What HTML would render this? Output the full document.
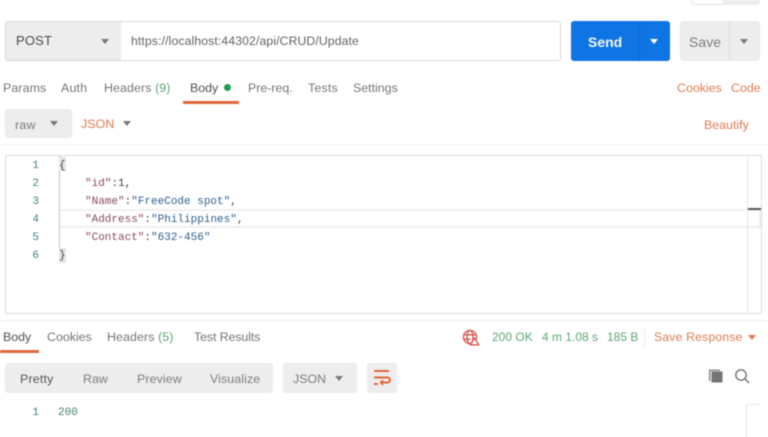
<!DOCTYPE html>
<html>
<head>
<meta charset="utf-8">
<style>
html,body{margin:0;padding:0;background:#fff}
#p{position:relative;width:768px;height:437px;overflow:hidden;background:#fff;font-family:"Liberation Sans",sans-serif;font-size:12.4px;color:#757575;filter:blur(.4px)}
#p div{position:absolute;white-space:nowrap}
.t{line-height:16px;height:16px}
.o{color:#dd7b52}
.g{color:#5fa577}
.m{font-family:"Liberation Mono",monospace;font-size:11px;line-height:18px;height:18px;letter-spacing:0}
.n{color:#3f7f7f;width:14px;text-align:right}
.s{color:#8a4a5e}
.c{width:0;height:0;border-left:4px solid transparent;border-right:4px solid transparent;border-top:5px solid #777}
</style>
</head>
<body>
<div id="p">
  <!-- top fragment -->
  <div style="left:691px;top:-6px;width:33px;height:11px;background:#fff;border:1px solid #e2e2e2;border-radius:3px;box-sizing:border-box"></div>
  <div style="left:724px;top:-6px;width:36px;height:11px;background:#ececec;border-radius:0 3px 3px 0"></div>

  <!-- URL row -->
  <div style="left:5px;top:21px;width:556px;height:40px;box-sizing:border-box;border:1px solid #d8d8d8;border-radius:3px;background:#fff"></div>
  <div style="left:6px;top:22px;width:115px;height:38px;background:#ededed;border-radius:2px 0 0 2px"></div>
  <div class="t" style="left:16px;top:33px;font-size:13px;color:#4a4a4a;letter-spacing:.2px">POST</div>
  <div class="c" style="left:101px;top:39px"></div>
  <div class="t" style="left:131px;top:33px;font-size:12.2px;color:#636363;letter-spacing:.13px">https://localhost:44302/api/CRUD/Update</div>

  <div style="left:571px;top:21px;width:99px;height:40px;background:#0f74e4;border-radius:3px"></div>
  <div style="left:639px;top:21px;width:1px;height:40px;background:#0d6ad4"></div>
  <div class="t" style="left:588px;top:34px;font-size:14px;font-weight:bold;color:#f4f9ff">Send</div>
  <div class="c" style="left:650px;top:39px;border-top-color:#fff"></div>

  <div style="left:680px;top:21px;width:80px;height:40px;background:#ededed;border-radius:3px"></div>
  <div style="left:729px;top:21px;width:1px;height:40px;background:#e0e0e0"></div>
  <div class="t" style="left:689px;top:34px;font-size:14px;color:#7d7d7d;letter-spacing:.05px">Save</div>
  <div class="c" style="left:740px;top:39px"></div>

  <!-- request tabs -->
  <div class="t" style="left:3px;top:80px;letter-spacing:.1px">Params</div>
  <div class="t" style="left:61px;top:80px;letter-spacing:.2px">Auth</div>
  <div class="t" style="left:104px;top:80px;letter-spacing:.1px">Headers <span class="g">(9)</span></div>
  <div class="t" style="left:190px;top:80px;color:#505050">Body</div>
  <div style="left:224px;top:84px;width:7px;height:7px;border-radius:50%;background:#1f9d4d"></div>
  <div style="left:183px;top:101px;width:56px;height:3px;background:#e2673a"></div>
  <div class="t" style="left:248px;top:80px">Pre-req.</div>
  <div class="t" style="left:308px;top:80px;letter-spacing:.2px">Tests</div>
  <div class="t" style="left:353px;top:80px">Settings</div>
  <div class="t o" style="left:677px;top:80px">Cookies</div>
  <div class="t o" style="left:731px;top:80px">Code</div>

  <!-- body type row -->
  <div style="left:5px;top:109px;width:67px;height:29px;background:#ededed;border-radius:3px"></div>
  <div class="t" style="left:15px;top:117px;color:#7a7a7a;letter-spacing:.3px">raw</div>
  <div class="c" style="left:50px;top:121px"></div>
  <div class="t o" style="left:81px;top:116px;letter-spacing:.1px">JSON</div>
  <div class="c" style="left:123px;top:121px"></div>
  <div class="t o" style="left:704px;top:117px">Beautify</div>
  <div style="left:0;top:144px;width:768px;height:1px;background:#efefef"></div>

  <!-- editor -->
  <div style="left:5px;top:155px;width:757px;height:159px;box-sizing:border-box;border:1px solid #dcdcdc;border-radius:2px"></div>
  <div style="left:59px;top:156px;width:1px;height:107px;background:#c4c4c4"></div>
  <div style="left:60px;top:209px;width:701px;height:19px;box-sizing:border-box;border:2px solid #f0f0f0;border-left:0"></div>
  <div style="left:747px;top:156px;width:1px;height:157px;background:#e6e6e6"></div>
  <div style="left:748px;top:208px;width:13px;height:2px;background:#555"></div>
  <div style="left:59px;top:157px;width:7px;height:14px;background:#e6e6e6"></div>
  <div style="left:59px;top:248px;width:7px;height:15px;background:#e6e6e6"></div>

  <div class="m n" style="left:25px;top:157px">1</div>
  <div class="m n" style="left:25px;top:175px">2</div>
  <div class="m n" style="left:25px;top:193px">3</div>
  <div class="m n" style="left:25px;top:211px">4</div>
  <div class="m n" style="left:25px;top:229px">5</div>
  <div class="m n" style="left:25px;top:247px">6</div>

  <div class="m" style="left:59px;top:157px;color:#444">{</div>
  <div class="m" style="left:85px;top:175px;color:#444"><span class="s">"id"</span>:1,</div>
  <div class="m" style="left:85px;top:193px;color:#444"><span class="s">"Name"</span>:<span style="color:#2f5f8f">"FreeCode spot"</span>,</div>
  <div class="m" style="left:85px;top:211px;color:#444"><span class="s">"Address"</span>:<span style="color:#2f5f8f">"Philippines"</span>,</div>
  <div class="m" style="left:85px;top:229px;color:#444"><span class="s">"Contact"</span>:<span style="color:#2f5f8f">"632-456"</span></div>
  <div class="m" style="left:59px;top:247px;color:#444">}</div>

  <div style="left:0;top:320px;width:768px;height:1px;background:#ebebeb"></div>

  <!-- response tabs -->
  <div class="t" style="left:3px;top:329px;color:#505050">Body</div>
  <div style="left:0;top:350px;width:39px;height:3px;background:#e2673a"></div>
  <div class="t" style="left:47px;top:329px">Cookies</div>
  <div class="t" style="left:107px;top:329px;letter-spacing:.1px">Headers <span class="g">(5)</span></div>
  <div class="t" style="left:194px;top:329px;letter-spacing:-.1px">Test Results</div>

  <!-- status -->
  <svg style="position:absolute;left:462px;top:329px" width="18" height="17" viewBox="0 0 18 17" fill="none" stroke="#d9534f" stroke-width="1.3">
    <circle cx="8" cy="8" r="6.600"/>
    <ellipse cx="8" cy="8" rx="3" ry="6.600"/>
    <path d="M1.500 5.800h13M1.500 10.200h7"/>
    <path d="M12.500 9l4.200 6.800H8.300z" fill="#fff"/>
  </svg>
  <div class="t g" style="left:492px;top:329px;font-size:12px">200 OK</div>
  <div class="t g" style="left:542px;top:329px;font-size:12px">4 m 1.08 s</div>
  <div class="t g" style="left:607px;top:329px;font-size:12px">185 B</div>
  <div style="left:644px;top:328px;width:1px;height:18px;background:#ececec"></div>
  <div class="t o" style="left:654px;top:329px;font-size:12.2px;letter-spacing:.2px">Save Response</div>
  <div class="c" style="left:748px;top:335px;border-top-color:#dd7b52"></div>

  <!-- response toolbar -->
  <div style="left:5px;top:363px;width:268px;height:30px;background:#ededed;border-radius:3px"></div>
  <div class="t" style="left:20px;top:371px;color:#555;letter-spacing:.2px">Pretty</div>
  <div class="t" style="left:83px;top:371px;color:#7d7d7d">Raw</div>
  <div class="t" style="left:137px;top:371px;color:#7d7d7d;letter-spacing:.1px">Preview</div>
  <div class="t" style="left:210px;top:371px;color:#7d7d7d;letter-spacing:.1px">Visualize</div>
  <div style="left:283px;top:363px;width:74px;height:30px;background:#ededed;border-radius:3px"></div>
  <div class="t" style="left:293px;top:371px;color:#7d7d7d">JSON</div>
  <div class="c" style="left:335px;top:376px"></div>
  <div style="left:367px;top:363px;width:30px;height:30px;background:#ededed;border-radius:3px"></div>
  <svg style="position:absolute;left:373px;top:369px" width="18" height="18" viewBox="0 0 18 18" fill="none" stroke="#e2673a" stroke-width="2">
    <path d="M1 2h15M1 8.500h13.500a2.500 2.500 0 0 1 0 5H8M1 15h4"/>
    <path d="M10 11l-2.500 2.500L10 16" stroke-width="1.500"/>
  </svg>
  <svg style="position:absolute;left:708px;top:368px" width="16" height="16" viewBox="0 0 16 16">
    <path d="M1 1.500h11v1.500H2.500v10H1z" fill="#8a8a8a"/>
    <rect x="3.500" y="3.500" width="11" height="11" fill="#757575"/>
  </svg>
  <svg style="position:absolute;left:734px;top:368px" width="16" height="16" viewBox="0 0 16 16" fill="none" stroke="#757575" stroke-width="1.400">
    <circle cx="7" cy="7" r="5.200"/>
    <path d="M11 11l4 4"/>
  </svg>

  <div class="m n" style="left:25px;top:404px">1</div>
  <div class="m" style="left:58px;top:404px;color:#3f7f6f">200</div>
  <div style="left:746px;top:404px;width:1px;height:33px;background:#e6e6e6"></div>
  <div style="left:746px;top:404px;width:14px;height:1px;background:#ebebeb"></div>
</div>
</body>
</html>
